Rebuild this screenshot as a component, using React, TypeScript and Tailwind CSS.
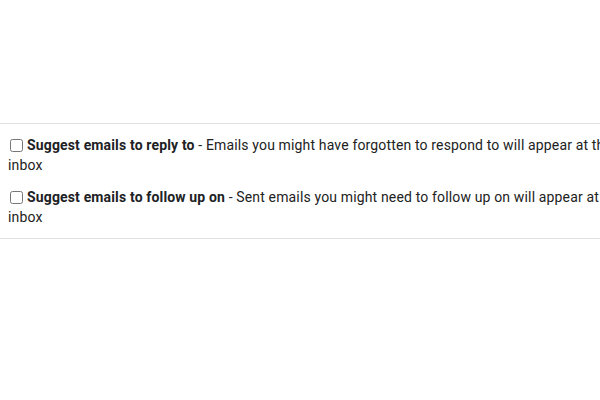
import React from "react";

export default function App() {
  const items = [
    {
      title: "Suggest emails to reply to",
      desc: "Emails you might have forgotten to respond to will appear at the top of your inbox",
    },
    {
      title: "Suggest emails to follow up on",
      desc: "Sent emails you might need to follow up on will appear at the top of your inbox",
    },
  ];
  return (
    <div className="w-[600px] h-[400px] overflow-hidden bg-white" style={{ fontFamily: "Roboto, Arial, sans-serif" }}>
      <div className="mt-[123px] w-[718px] border-y border-[#e0e0e0] py-[5px] pl-[8px] text-[14px] leading-[20px] tracking-[0.15px] text-[#222]">
        {items.map((it) => (
          <div key={it.title} className="py-[6px]">
            <input type="checkbox" className="m-0 ml-[2px] mr-[4px] h-[13px] w-[13px] align-[-2px]" />
            <b className="font-bold text-[#202124]">{it.title}</b> - {it.desc}
          </div>
        ))}
      </div>
    </div>
  );
}
